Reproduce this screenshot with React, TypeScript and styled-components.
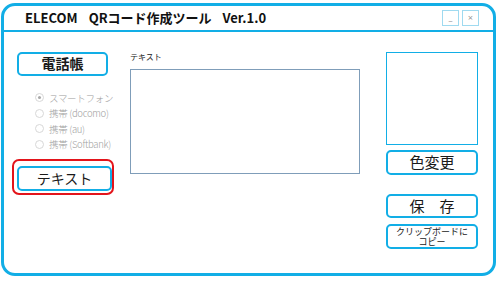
import React from 'react';
import styled, { createGlobalStyle } from 'styled-components';

const GlobalStyle = createGlobalStyle`
  html, body {
    margin: 0;
    padding: 0;
    background: #ffffff;
  }
  body {
    font-family: "Noto Sans CJK JP", "Noto Sans", sans-serif;
  }
`;

const CYAN = '#12aee6';

const Window = styled.div`
  box-sizing: border-box;
  margin: 3px 0 0 1px;
  width: 495px;
  height: 273px;
  border: 3px solid ${CYAN};
  border-radius: 14px;
  display: flex;
  flex-direction: column;
  overflow: hidden;
  background: #fff;
`;

const TitleBar = styled.div`
  box-sizing: border-box;
  height: 26px;
  border-bottom: 2px solid ${CYAN};
  display: flex;
  align-items: flex-start;
  padding: 0 14px 0 21px;
`;

const Title = styled.div`
  flex: 1;
  font-family: "Noto Sans CJK JP", sans-serif;
  font-weight: 700;
  font-size: 13px;
  line-height: 24px;
  color: #111;
  white-space: pre;
`;

const Gap = styled.span`
  display: inline-block;
  width: 11px;
`;

const WinButtons = styled.div`
  display: flex;
  gap: 3px;
  padding-top: 4px;
`;

const WinButton = styled.div`
  box-sizing: border-box;
  width: 17px;
  height: 16px;
  border: 1px solid #9fdaf0;
  display: flex;
  align-items: center;
  justify-content: center;
  font-family: "DejaVu Sans", sans-serif;
  font-size: 7px;
  color: #888;
`;

const Body = styled.div`
  flex: 1;
  display: flex;
  padding: 20px 15px 0 13px;
`;

const LeftColumn = styled.div`
  width: 91px;
  display: flex;
  flex-direction: column;
`;

const CenterColumn = styled.div`
  width: 230px;
  margin-left: 22px;
  display: flex;
  flex-direction: column;
`;

const RightColumn = styled.div`
  width: 92px;
  margin-left: 26px;
  display: flex;
  flex-direction: column;
`;

const Button = styled.div<{ $h?: number; $size?: number; $bold?: boolean; $mt?: number }>`
  box-sizing: border-box;
  width: 100%;
  height: ${({ $h }) => $h ?? 25}px;
  margin-top: ${({ $mt }) => $mt ?? 0}px;
  border: 2px solid ${CYAN};
  border-radius: 5px;
  display: flex;
  align-items: center;
  justify-content: center;
  text-align: center;
  font-size: ${({ $size }) => $size ?? 14}px;
  font-weight: ${({ $bold }) => ($bold ? 700 : 400)};
  color: #1a1a1a;
  line-height: 1.1;
  white-space: pre;
`;

const RadioGroup = styled.div`
  margin-top: 14px;
  padding-left: 18px;
  display: flex;
  flex-direction: column;
`;

const RadioRow = styled.div`
  height: 15.5px;
  display: flex;
  align-items: center;
  gap: 5px;
  font-size: 9.5px;
  letter-spacing: -0.3px;
  font-weight: 300;
  color: #a0a0a0;
  white-space: nowrap;
`;

const RadioCircle = styled.span<{ $checked?: boolean }>`
  box-sizing: border-box;
  flex: 0 0 auto;
  width: 9px;
  height: 9px;
  border-radius: 50%;
  border: 1px solid #d8d8d8;
  display: flex;
  align-items: center;
  justify-content: center;

  &::after {
    content: '';
    display: ${({ $checked }) => ($checked ? 'block' : 'none')};
    width: 3px;
    height: 3px;
    border-radius: 50%;
    background: #a8a8a8;
  }
`;

const Highlight = styled.div`
  box-sizing: border-box;
  margin: 7px 0 0 -5px;
  width: 102px;
  height: 36px;
  border: 2px solid #e3141b;
  border-radius: 7px;
  padding: 5px 0 0 3px;
`;

const FieldLabel = styled.div`
  font-size: 8px;
  line-height: 10px;
  color: #222;
`;

const TextArea = styled.div`
  box-sizing: border-box;
  margin-top: 7px;
  height: 105px;
  border: 1px solid #7f9db9;
`;

const QrBox = styled.div`
  box-sizing: border-box;
  height: 93px;
  border: 1.5px solid ${CYAN};
`;

const radios = [
  { label: 'スマートフォン', checked: true },
  { label: '携帯 (docomo)' },
  { label: '携帯 (au)' },
  { label: '携帯 (Softbank)' },
];

export default function App() {
  return (
    <>
      <GlobalStyle />
      <Window>
        <TitleBar>
          <Title>
            ELECOM<Gap />QRコード作成ツール<Gap />Ver.1.0
          </Title>
          <WinButtons>
            <WinButton>_</WinButton>
            <WinButton>×</WinButton>
          </WinButtons>
        </TitleBar>
        <Body>
          <LeftColumn>
            <Button $h={24} $bold>電話帳</Button>
            <RadioGroup>
              {radios.map((r) => (
                <RadioRow key={r.label}>
                  <RadioCircle $checked={r.checked} />
                  {r.label}
                </RadioRow>
              ))}
            </RadioGroup>
            <Highlight>
              <Button $h={25} $size={14}>テキスト</Button>
            </Highlight>
          </LeftColumn>
          <CenterColumn>
            <FieldLabel>テキスト</FieldLabel>
            <TextArea />
          </CenterColumn>
          <RightColumn>
            <QrBox />
            <Button $mt={5} $size={15}>色変更</Button>
            <Button $mt={19} $h={24} $size={15}>{'保　存'}</Button>
            <Button $mt={6} $size={9}>{'クリップボードに\nコピー'}</Button>
          </RightColumn>
        </Body>
      </Window>
    </>
  );
}
